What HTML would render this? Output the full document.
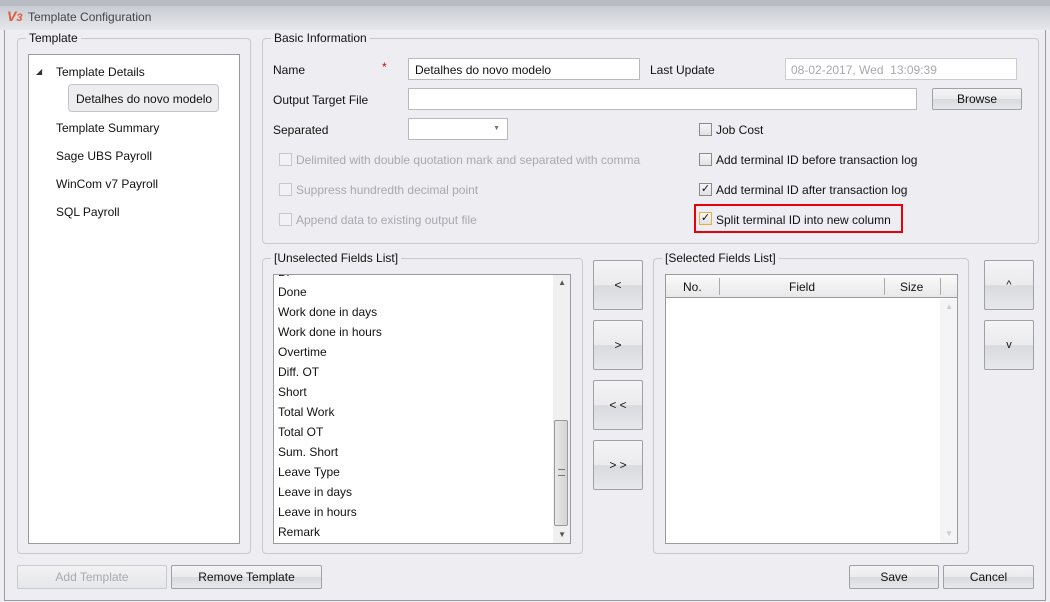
<!DOCTYPE html>
<html><head><meta charset="utf-8"><style>
*{box-sizing:border-box;margin:0;padding:0}
body{width:1050px;height:602px;overflow:hidden;background:#eeedf2;font-family:"Liberation Sans",sans-serif;font-size:12px;color:#111;position:relative}
.a{position:absolute}
.grp{position:absolute;border:1px solid #c9c8ce;border-radius:4px}
.lg{position:absolute;top:-8px;left:8px;background:#eeedf2;padding:0 3px;line-height:15px}
.box{position:absolute;background:#fff;border:1px solid #9a9aa0}
.inp{position:absolute;background:#fff;border:1px solid #b8b8be;height:22px}
.btn{position:absolute;border:1px solid #9fa1a7;border-radius:2px;background:linear-gradient(#f4f4f6 0%,#ebebee 50%,#d8dade 51%,#e6e8ec 100%);text-align:center;display:flex;align-items:center;justify-content:center}
.cb{position:absolute;width:13px;height:13px;border:1px solid #8a8a90;background:linear-gradient(#f6f6f6,#e2e2e2)}
.dis{color:#a8a8ae}
.dis .cb,.cb.dis{border-color:#c8c8cc;background:#f2f2f4}
.it{position:absolute;left:4px}
</style></head><body>
<div class="a" style="left:0;top:0;width:1050px;height:6px;background:#b9bcc3"></div>
<div class="a" style="left:0;top:6px;width:1050px;height:24px;background:linear-gradient(#c9ccd3,#e6e7ec)"></div>
<div class="a" style="left:7px;top:8px;color:#e05a3a;font-weight:bold;font-size:14px;font-style:italic">V<span style="font-size:11px">3</span></div>
<div class="a" style="left:28px;top:10px;color:#444;font-size:12px">Template Configuration</div>
<div class="a" style="left:4px;top:30px;width:1042px;height:571px;border:1px solid #9a9aa0;border-top:none"></div>

<div class="grp" style="left:17px;top:38px;width:234px;height:516px"><span class="lg">Template</span></div>
<div class="box" style="left:28px;top:54px;width:212px;height:490px">
 <div class="a" style="left:7px;top:12px;font-size:8px;color:#333">◢</div>
 <div class="a" style="left:27px;top:10px">Template Details</div>
 <div class="a" style="left:39px;top:29px;width:151px;height:28px;border:1px solid #c4c4c8;border-radius:4px;background:#ededef;padding:7px 0 0 7px">Detalhes do novo modelo</div>
 <div class="a" style="left:27px;top:66px">Template Summary</div>
 <div class="a" style="left:27px;top:94px">Sage UBS Payroll</div>
 <div class="a" style="left:27px;top:122px">WinCom v7 Payroll</div>
 <div class="a" style="left:27px;top:150px">SQL Payroll</div>
</div>

<div class="grp" style="left:262px;top:38px;width:777px;height:206px"><span class="lg">Basic Information</span></div>
<div class="a" style="left:273px;top:63px">Name</div>
<div class="a" style="left:382px;top:60px;color:#d00">*</div>
<div class="inp" style="left:408px;top:58px;width:232px;padding:4px 6px">Detalhes do novo modelo</div>
<div class="a" style="left:650px;top:63px">Last Update</div>
<div class="inp" style="left:785px;top:58px;width:232px;padding:4px 5px;color:#a8a8ae;border-color:#ccc">08-02-2017, Wed&nbsp; 13:09:39</div>
<div class="a" style="left:273px;top:93px">Output Target File</div>
<div class="inp" style="left:408px;top:88px;width:509px"></div>
<div class="btn" style="left:932px;top:88px;width:90px;height:22px">Browse</div>
<div class="a" style="left:273px;top:123px">Separated</div>
<div class="inp" style="left:408px;top:118px;width:100px"><span class="a" style="right:7px;top:6px;font-size:7px;color:#777">▼</span></div>
<div class="dis"><div class="cb" style="left:279px;top:153px"></div><div class="a" style="left:296px;top:153px">Delimited with double quotation mark and separated with comma</div></div>
<div class="dis"><div class="cb" style="left:279px;top:183px"></div><div class="a" style="left:296px;top:183px">Suppress hundredth decimal point</div></div>
<div class="dis"><div class="cb" style="left:279px;top:213px"></div><div class="a" style="left:296px;top:213px">Append data to existing output file</div></div>
<div class="cb" style="left:699px;top:123px"></div><div class="a" style="left:716px;top:123px">Job Cost</div>
<div class="cb" style="left:699px;top:153px"></div><div class="a" style="left:716px;top:153px">Add terminal ID before transaction log</div>
<div class="cb" style="left:699px;top:183px;font-size:11px;line-height:11px;text-align:center">✓</div><div class="a" style="left:716px;top:183px">Add terminal ID after transaction log</div>
<div class="a" style="left:694px;top:204px;width:209px;height:29px;border:2px solid #e8000c"></div>
<div class="cb" style="left:699px;top:212px;border-color:#e0b040;font-size:11px;line-height:11px;text-align:center">✓</div><div class="a" style="left:716px;top:213px">Split terminal ID into new column</div>

<div class="grp" style="left:262px;top:258px;width:321px;height:296px"><span class="lg">[Unselected Fields List]</span></div>
<div class="box" style="left:273px;top:274px;width:298px;height:270px;overflow:hidden">
 <div class="it" style="top:-10px">Di</div>
 <div class="it" style="top:10px">Done</div>
 <div class="it" style="top:30px">Work done in days</div>
 <div class="it" style="top:50px">Work done in hours</div>
 <div class="it" style="top:70px">Overtime</div>
 <div class="it" style="top:90px">Diff. OT</div>
 <div class="it" style="top:110px">Short</div>
 <div class="it" style="top:130px">Total Work</div>
 <div class="it" style="top:150px">Total OT</div>
 <div class="it" style="top:170px">Sum. Short</div>
 <div class="it" style="top:190px">Leave Type</div>
 <div class="it" style="top:210px">Leave in days</div>
 <div class="it" style="top:230px">Leave in hours</div>
 <div class="it" style="top:250px">Remark</div>
 <div class="a" style="right:0;top:0;width:17px;height:268px;background:#f0f0f0"></div>
 <div class="a" style="right:4px;top:3px;font-size:8px;color:#555">▲</div>
 <div class="a" style="right:4px;top:255px;font-size:8px;color:#555">▼</div>
 <div class="a" style="right:2px;top:145px;width:14px;height:106px;border:1px solid #999;border-radius:2px;background:linear-gradient(90deg,#e8e8e8,#d4d4d4)"><div class="a" style="left:3px;top:48px;width:7px;height:7px;border-top:1px solid #777;border-bottom:1px solid #777"></div></div>
</div>

<div class="btn" style="left:593px;top:260px;width:50px;height:50px">&lt;</div>
<div class="btn" style="left:593px;top:320px;width:50px;height:50px">&gt;</div>
<div class="btn" style="left:593px;top:380px;width:50px;height:50px">&lt; &lt;</div>
<div class="btn" style="left:593px;top:440px;width:50px;height:50px">&gt; &gt;</div>

<div class="grp" style="left:653px;top:258px;width:316px;height:296px"><span class="lg">[Selected Fields List]</span></div>
<div class="box" style="left:665px;top:274px;width:293px;height:270px;overflow:hidden">
 <div class="a" style="left:0;top:0;width:291px;height:23px;border-bottom:1px solid #999;background:linear-gradient(#fafafa,#e8e8ea)"></div>
 <div class="a" style="left:17px;top:5px">No.</div>
 <div class="a" style="left:53px;top:3px;height:17px;border-left:1px solid #aaa"></div>
 <div class="a" style="left:123px;top:5px">Field</div>
 <div class="a" style="left:218px;top:3px;height:17px;border-left:1px solid #aaa"></div>
 <div class="a" style="left:234px;top:5px">Size</div>
 <div class="a" style="left:274px;top:3px;height:17px;border-left:1px solid #aaa"></div>
 <div class="a" style="right:0;top:24px;width:17px;height:246px;background:#f4f4f4"></div>
 <div class="a" style="right:4px;top:27px;font-size:8px;color:#ccc">▲</div>
 <div class="a" style="right:4px;top:254px;font-size:8px;color:#ccc">▼</div>
</div>

<div class="btn" style="left:984px;top:260px;width:50px;height:50px;font-size:11px">^</div>
<div class="btn" style="left:984px;top:320px;width:50px;height:50px;font-size:11px">v</div>

<div class="btn" style="left:17px;top:565px;width:150px;height:24px;color:#a8a8ae;border-color:#cacace;background:linear-gradient(#f2f2f4,#e6e7ea)">Add Template</div>
<div class="btn" style="left:171px;top:565px;width:151px;height:24px">Remove Template</div>
<div class="btn" style="left:849px;top:565px;width:90px;height:24px">Save</div>
<div class="btn" style="left:943px;top:565px;width:91px;height:24px">Cancel</div>
</body></html>
